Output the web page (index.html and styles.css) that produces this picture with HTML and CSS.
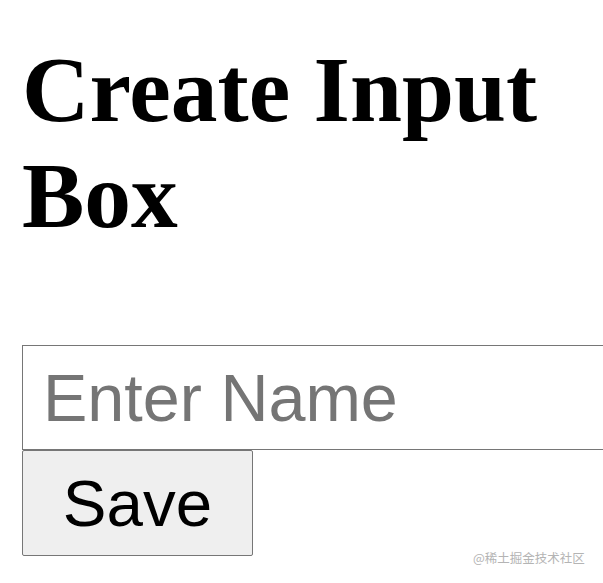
FILE: index.html
```html
<!DOCTYPE html>
<html lang="en">
<head>
<meta charset="utf-8">
<title>Create Input Box</title>
<link rel="stylesheet" href="styles.css">
</head>
<body>
<main class="page">
  <h1 class="title">Create Input Box</h1>
  <form class="form">
    <input class="name-input" type="text" placeholder="Enter Name">
    <button class="save-btn" type="button">Save</button>
  </form>
</main>
<div class="watermark">@稀土掘金技术社区</div>
</body>
</html>
```

FILE: styles.css
```css
html, body {
  margin: 0;
  padding: 0;
  background: #ffffff;
  overflow: hidden;
}

.page {
  padding: 37px 0 0 22px;
}

.title {
  margin: 0;
  font-family: "Liberation Serif", "Times New Roman", serif;
  font-weight: bold;
  font-size: 93.5px;
  line-height: 106px;
  color: #000;
}

.form {
  margin-top: 96px;
  display: flex;
  flex-direction: column;
  align-items: flex-start;
  overflow: hidden;
}

/* the field is wider than the window, so its right edge is cut off */
.name-input {
  box-sizing: border-box;
  width: 620px;
  flex-shrink: 0;
  height: 105px;
  margin: 0;
  padding: 0 0 0 20px;
  border: 1px solid #767676;
  border-radius: 0;
  font-family: "Liberation Sans", Arial, sans-serif;
  font-size: 66.5px;
  color: #000;
  outline: none;
}

.name-input::placeholder {
  color: #757575;
}

.save-btn {
  box-sizing: border-box;
  width: 231px;
  height: 106px;
  margin: 0;
  padding: 0;
  background: #efefef;
  border: 1px solid #767676;
  border-radius: 2px;
  font-family: "Liberation Sans", Arial, sans-serif;
  font-size: 65.5px;
  color: #000;
}

.watermark {
  position: absolute;
  left: 473px;
  top: 548px;
  font-family: "Noto Sans CJK SC", sans-serif;
  font-size: 12.5px;
  color: #b4b4b4;
}
```
